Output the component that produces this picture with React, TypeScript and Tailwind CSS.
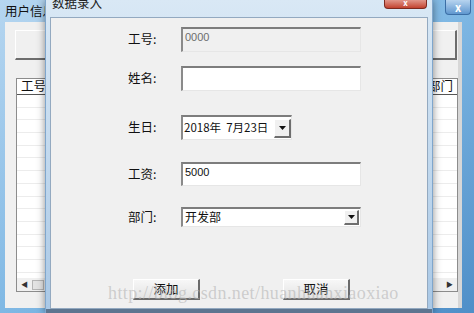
import React from "react";

const FONT = "font-['Noto_Sans_CJK_SC','Microsoft_YaHei',sans-serif]";

function SunkenBox({
  className = "",
  children,
}: {
  className?: string;
  children?: React.ReactNode;
}) {
  return (
    <div
      className={`border-t-2 border-l-2 border-t-[#7d7d7d] border-l-[#8a8a8a] border-b border-r border-b-[#e6e6e6] border-r-[#e6e6e6] ${className}`}
    >
      {children}
    </div>
  );
}

function DropArrow({ className = "" }: { className?: string }) {
  return (
    <div
      className={`flex items-center justify-center bg-[#f0f0f0] border-t border-l border-t-white border-l-white border-b-2 border-r-2 border-b-[#6e6e6e] border-r-[#6e6e6e] ${className}`}
    >
      <svg width="7" height="4" viewBox="0 0 7 4">
        <path d="M0 0h7L3.5 4z" fill="#111" />
      </svg>
    </div>
  );
}

function FormRow({
  label,
  mt,
  children,
}: {
  label: string;
  mt: string;
  children: React.ReactNode;
}) {
  return (
    <div className={`flex items-center ${mt}`}>
      <span className="w-[53px] pl-[77px] box-content text-[12.5px] text-[#111] whitespace-nowrap">
        {label}
      </span>
      {children}
    </div>
  );
}

function Button({ label, className = "" }: { label: string; className?: string }) {
  return (
    <div
      className={`w-[67px] h-[21px] flex items-center justify-center text-[12.5px] text-[#111] bg-gradient-to-b from-[#f7f7f7] to-[#e4e4e4] border-t border-l border-t-white border-l-white border-b-2 border-r-2 border-b-[#6a6a6a] border-r-[#6a6a6a] ${className}`}
    >
      {label}
    </div>
  );
}

function BackgroundWindow() {
  const rows = Array.from({ length: 15 });
  return (
    <div className="flex flex-col h-full">
      <div className="h-[22px] flex items-start justify-between">
        <span className="pl-[5px] pt-[2px] text-[12.5px] text-[#111]">用户信息</span>
        <div className="mr-[3px] w-[26px] h-[15px] rounded-b-[4px] bg-gradient-to-b from-[#b7d4ef] to-[#5f97cf] border border-t-0 border-[#3b6ea5] flex items-center justify-center text-white text-[11px] font-bold">
          x
        </div>
      </div>
      <div className="flex flex-1 pl-[5px] pr-[12px] pb-[5px]">
        <div className="flex-1 flex flex-col bg-[#f0f0f0] border-r-4 border-r-[#d7d7d7]">
          <div className="mt-[8px] ml-[10px] mr-[1px] h-[30px] border-t border-l border-t-white border-l-white border-b-2 border-r-2 border-b-[#6d6d6d] border-r-[#6d6d6d]" />
          <div className="mt-[18px] ml-[11px] h-[214px] flex flex-col bg-white border border-[#8c8c8c]">
            <div className="h-[16px] flex justify-between items-center border-b border-b-[#555] bg-white text-[12.5px] text-[#111]">
              <span className="pl-[4px]">工号</span>
              <span className="pr-[4px]">部门</span>
            </div>
            <div className="flex-1 flex flex-col overflow-hidden">
              {rows.map((_, i) => (
                <div key={i} className="h-[12.7px] shrink-0 border-b border-b-[#ececec]" />
              ))}
            </div>
            <div className="h-[13px] flex items-center justify-between bg-[#f0f0f0] px-[4px] text-[7px] text-[#333]">
              <div className="flex items-center gap-[4px]">
                <span>◀</span>
                <div className="w-[12px] h-[10px] bg-[#e3e3e3] border border-[#b5b5b5]" />
              </div>
              <span>▶</span>
            </div>
          </div>
        </div>
      </div>
    </div>
  );
}

function Dialog() {
  return (
    <div className="absolute left-[45px] top-0 w-[388px] h-[313px] flex flex-col bg-gradient-to-b from-[#d9e8f5] via-[#c2d9ee] to-[#a9c8e6] border-l border-r border-[#7fa6cc] shadow-[0_0_8px_rgba(0,0,0,0.45)]">
      <div className="h-[17px] flex items-start justify-between">
        <span className="pl-[6px] -mt-[6px] text-[12.5px] text-[#222]">数据录入</span>
        <div className="mr-[5px] w-[43px] h-[9px] rounded-b-[4px] bg-gradient-to-b from-[#e0958a] to-[#c2412f] border border-t-0 border-[#7d2a20] flex items-start justify-center text-white text-[8px] leading-[6px] font-bold">
          x
        </div>
      </div>
      <div className="mx-[4px] h-[292px] bg-[#f0f0f0] border border-[#93a9c0] flex flex-col">
        <FormRow label="工号:" mt="mt-[9px]">
          <SunkenBox className="w-[180px] h-[25px] bg-[#f0f0f0] px-[2px] text-[11px] text-[#6d6d6d] leading-[16px] font-['Liberation_Sans',sans-serif]">
            0000
          </SunkenBox>
        </FormRow>
        <FormRow label="姓名:" mt="mt-[14px]">
          <SunkenBox className="w-[180px] h-[25px] bg-white" />
        </FormRow>
        <FormRow label="生日:" mt="mt-[24px]">
          <SunkenBox className="w-[111px] h-[25px] bg-white flex items-stretch">
            <span className="flex-1 pl-[1px] pt-[2px] text-[11.5px] text-[#111] whitespace-nowrap">
              2018年&nbsp;&nbsp;7月23日
            </span>
            <DropArrow className="w-[17px] mt-[2px] mb-[1px]" />
          </SunkenBox>
        </FormRow>
        <FormRow label="工资:" mt="mt-[22px]">
          <SunkenBox className="w-[180px] h-[24px] bg-white px-[2px] text-[11px] text-[#111] leading-[16px] font-['Liberation_Sans',sans-serif]">
            5000
          </SunkenBox>
        </FormRow>
        <FormRow label="部门:" mt="mt-[21px]">
          <SunkenBox className="w-[180px] h-[20px] bg-white flex items-stretch">
            <span className="flex-1 pl-[2px] text-[12px] leading-[16px] text-[#111]">开发部</span>
            <DropArrow className="w-[15px] my-[1px] mr-[1px]" />
          </SunkenBox>
        </FormRow>
        <div className="mt-[52px] flex">
          <Button label="添加" className="ml-[82px]" />
          <Button label="取消" className="ml-[83px]" />
        </div>
      </div>
      <div className="flex-1 bg-[#5d7590]" />
    </div>
  );
}

export default function App() {
  return (
    <div
      className={`relative w-[474px] h-[313px] overflow-hidden bg-gradient-to-br from-[#b6d6f0] via-[#7fb8e4] to-[#4f8fc8] ${FONT}`}
    >
      <BackgroundWindow />
      <Dialog />
      <div className="absolute left-[108px] top-[280px] text-[18px] tracking-[0.4px] text-[#b4b4b4]/60 font-['Liberation_Serif',serif] whitespace-nowrap pointer-events-none">
        http://blog.csdn.net/huanhuanxiaoxiao
      </div>
    </div>
  );
}
